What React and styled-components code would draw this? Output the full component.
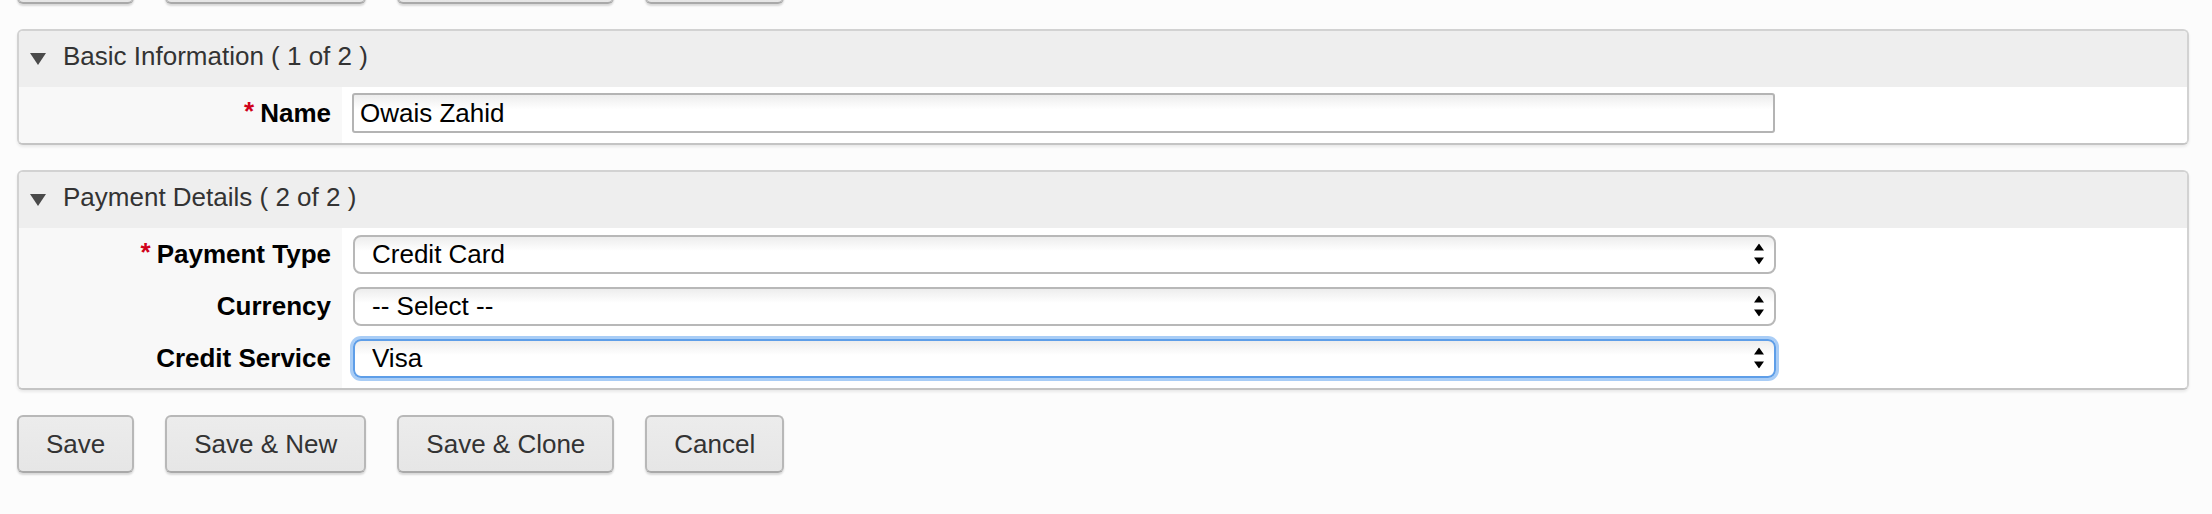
import React from "react";
import styled, { createGlobalStyle, css } from "styled-components";

const GlobalStyle = createGlobalStyle`
  html, body { margin: 0; padding: 0; background: #fcfcfc; }
  body { font-family: "Liberation Sans", Arial, Helvetica, sans-serif; font-size: 26px; color: #000; overflow: hidden; }
  * { box-sizing: border-box; }
`;

const Page = styled.div`
  width: 2212px;
  height: 514px;
  padding: 0 23px 0 17px;
  display: flex;
  flex-direction: column;
  gap: 25px;
`;

const ButtonRow = styled.div`
  display: flex;
  gap: 31px;
  margin-top: ${(p) => (p.$cut ? "-54px" : "0")};
`;

const Button = styled.button`
  font-family: inherit;
  font-size: 26px;
  line-height: 30px;
  color: #333;
  height: 58px;
  padding: 0 27px;
  background: linear-gradient(to bottom, #ececec, #e6e6e6);
  border: 2px solid #b8b8b8;
  border-bottom-color: #a9a9a9;
  border-radius: 6px;
  box-shadow: 0 2px 2px rgba(0, 0, 0, 0.14);
  cursor: pointer;
`;

const Panel = styled.section`
  border: 2px solid #d2d2d2;
  border-bottom-color: #c4c4c4;
  border-radius: 6px;
  background: #fff;
  box-shadow: 0 2px 3px rgba(0, 0, 0, 0.08);
  overflow: hidden;
`;

const Header = styled.div`
  height: 56px;
  background: #eeeeee;
  display: flex;
  align-items: center;
  padding: 0 0 6px 11px;
  color: #333;
  font-size: 26px;
  line-height: 50px;
`;

const Caret = styled.svg`
  width: 16px;
  height: 12px;
  margin-top: 5px;
  margin-right: 17px;
  flex: none;
`;

const Body = styled.div`
  background: linear-gradient(to right, #f8f8f8 323px, #fff 323px);
  padding-bottom: 4px;
`;

const Row = styled.div`
  display: grid;
  grid-template-columns: 323px 1fr;
  padding: 6px 0;
  align-items: center;
`;

const Label = styled.label`
  text-align: right;
  padding-right: 11px;
  font-weight: bold;
  font-size: 26px;
  line-height: 40px;
  color: #000;
  white-space: nowrap;
`;

const Required = styled.span`
  color: #d0021b;
  font-weight: bold;
  font-size: 26px;
  margin-right: 6px;
  position: relative;
  top: -2px;
`;

const Field = styled.div`
  padding-left: 10px;
`;

const fieldBase = css`
  display: block;
  width: 1423px;
  height: 40px;
  font-family: inherit;
  font-size: 26px;
  color: #000;
  background: linear-gradient(to bottom, #ededed 0, #fff 40%, #fff 100%);
  border: 2px solid #b4b4b4;
  outline: none;
`;

const TextInput = styled.input`
  ${fieldBase}
  border-radius: 3px;
  padding: 0 6px;
`;

const SelectWrap = styled.div`
  position: relative;
  width: 1423px;
  margin-left: 1px;
`;

const Select = styled.select`
  ${fieldBase}
  width: 100%;
  height: 39px;
  appearance: none;
  -webkit-appearance: none;
  border-radius: 8px;
  padding: 0 40px 0 17px;
  border-color: ${(p) => (p.$focused ? "#5e9ee8" : "#b8b8b8")};
  box-shadow: ${(p) => (p.$focused ? "0 0 0 3px #a9cdf6" : "none")};
`;

const Arrows = styled.svg`
  position: absolute;
  right: 12px;
  top: 50%;
  width: 10px;
  height: 21px;
  transform: translateY(-50%);
  pointer-events: none;
`;

function SelectField({ value, options, focused }) {
  return (
    <SelectWrap>
      <Select $focused={focused} defaultValue={value}>
        {options.map((o) => (
          <option key={o}>{o}</option>
        ))}
      </Select>
      <Arrows viewBox="0 0 10 21">
        <polygon points="5,0 10,7 0,7" fill="#000" />
        <polygon points="0,14 10,14 5,21" fill="#000" />
      </Arrows>
    </SelectWrap>
  );
}

function SectionHeader({ children }) {
  return (
    <Header>
      <Caret viewBox="0 0 16 12">
        <polygon points="0,0 16,0 8,12" fill="#4a4a4a" />
      </Caret>
      {children}
    </Header>
  );
}

function Buttons({ cut }) {
  return (
    <ButtonRow $cut={cut}>
      <Button>Save</Button>
      <Button>Save &amp; New</Button>
      <Button>Save &amp; Clone</Button>
      <Button>Cancel</Button>
    </ButtonRow>
  );
}

export default function App() {
  return (
    <>
      <GlobalStyle />
      <Page>
        <Buttons cut />
        <Panel>
          <SectionHeader>Basic Information ( 1 of 2 )</SectionHeader>
          <Body>
            <Row>
              <Label>
                <Required>*</Required>Name
              </Label>
              <Field>
                <TextInput defaultValue="Owais Zahid" />
              </Field>
            </Row>
          </Body>
        </Panel>
        <Panel>
          <SectionHeader>Payment Details ( 2 of 2 )</SectionHeader>
          <Body>
            <Row>
              <Label>
                <Required>*</Required>Payment Type
              </Label>
              <Field>
                <SelectField value="Credit Card" options={["Credit Card", "Cash", "Cheque"]} />
              </Field>
            </Row>
            <Row>
              <Label>Currency</Label>
              <Field>
                <SelectField value="-- Select --" options={["-- Select --", "USD", "EUR"]} />
              </Field>
            </Row>
            <Row>
              <Label>Credit Service</Label>
              <Field>
                <SelectField value="Visa" options={["Visa", "MasterCard", "Amex"]} focused />
              </Field>
            </Row>
          </Body>
        </Panel>
        <Buttons />
      </Page>
    </>
  );
}
